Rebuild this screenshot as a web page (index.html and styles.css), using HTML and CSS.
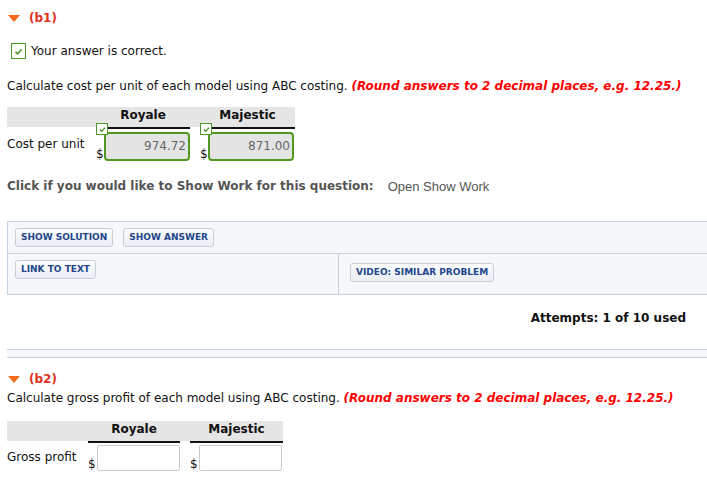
FILE: index.html
```html
<!DOCTYPE html>
<html>
<head>
<meta charset="utf-8">
<link rel="stylesheet" href="styles.css">
</head>
<body>
<div class="page">
  <div class="part-head part-head-b1">
    <span class="tri"></span><span class="part-label">(b1)</span>
  </div>
  <div class="correct">
    <span class="chk-big"><svg width="11" height="11" viewBox="0 0 11 11"><path d="M2.5 5.8 L4.6 7.8 L8.6 3.2" fill="none" stroke="#4a9a2a" stroke-width="1.6"/></svg></span>
    <span>Your answer is correct.</span>
  </div>
  <p class="q q-b1">Calculate cost per unit of each model using ABC costing. <em class="hint">(Round answers to 2 decimal places, e.g. 12.25.)</em></p>

  <div class="grid grid-b1">
    <div class="hd hd-blank"></div>
    <div class="hd hd-col">Royale</div>
    <div class="hd hd-gap"></div>
    <div class="hd hd-col">Majestic</div>
    <div class="rowlabel">Cost per unit</div>
    <div class="cell">
      <span class="mini-chk"><svg width="9" height="9" viewBox="0 0 9 9"><path d="M1.8 4.6 L3.7 6.3 L7.2 2.6" fill="none" stroke="#4a9a2a" stroke-width="1.3"/></svg></span>
      <span class="dollar">$</span><span class="inp inp-ok">974.72</span>
    </div>
    <div></div>
    <div class="cell">
      <span class="mini-chk"><svg width="9" height="9" viewBox="0 0 9 9"><path d="M1.8 4.6 L3.7 6.3 L7.2 2.6" fill="none" stroke="#4a9a2a" stroke-width="1.3"/></svg></span>
      <span class="dollar">$</span><span class="inp inp-ok">871.00</span>
    </div>
  </div>

  <div class="showwork">
    <span class="sw-label">Click if you would like to Show Work for this question:</span>
    <span class="sw-link">Open Show Work</span>
  </div>

  <div class="toolbox">
    <div class="tb-row1">
      <span class="btn">SHOW SOLUTION</span>
      <span class="btn">SHOW ANSWER</span>
    </div>
    <div class="tb-row2">
      <div class="tb-left"><span class="btn">LINK TO TEXT</span></div>
      <div class="tb-right"><span class="btn">VIDEO: SIMILAR PROBLEM</span></div>
    </div>
  </div>

  <div class="attempts">Attempts: 1 of 10 used</div>

  <div class="sep"></div>

  <div class="part-head part-head-b2">
    <span class="tri"></span><span class="part-label">(b2)</span>
  </div>
  <p class="q q-b2">Calculate gross profit of each model using ABC costing. <em class="hint">(Round answers to 2 decimal places, e.g. 12.25.)</em></p>

  <div class="grid grid-b2">
    <div class="hd hd-blank"></div>
    <div class="hd hd-col">Royale</div>
    <div class="hd hd-gap"></div>
    <div class="hd hd-col">Majestic</div>
    <div class="rowlabel">Gross profit</div>
    <div class="cell"><span class="dollar">$</span><span class="inp inp-empty"></span></div>
    <div></div>
    <div class="cell"><span class="dollar">$</span><span class="inp inp-empty"></span></div>
  </div>
</div>
</body>
</html>
```
FILE: styles.css
```css
html, body {
  margin: 0;
  padding: 0;
  background: #fff;
}
body {
  font-family: "DejaVu Sans", Verdana, sans-serif;
  font-size: 12px;
  color: #111;
  width: 707px;
  overflow: hidden;
}
.page {
  padding-left: 7px;
}
.part-head {
  display: flex;
  align-items: center;
  gap: 9px;
  height: 20px;
}
.part-head-b1 {
  margin-top: 8px;
  padding-left: 1px;
}
.part-head-b2 {
  margin-top: 11px;
  padding-left: 1px;
}
.tri {
  width: 0;
  height: 0;
  border-left: 6px solid transparent;
  border-right: 6px solid transparent;
  border-top: 7px solid #f26a1b;
}
.part-label {
  color: #e0301e;
  font-weight: bold;
  font-size: 12px;
}
.correct {
  display: flex;
  align-items: center;
  gap: 5px;
  margin-top: 15px;
  padding-left: 4px;
}
.chk-big {
  width: 13px;
  height: 14px;
  border: 1.5px solid #4a9a2a;
  display: flex;
  align-items: center;
  justify-content: center;
  background: #fff;
}
.q {
  margin: 0;
  line-height: 16px;
}
.q-b1 {
  margin-top: 19px;
}
.q-b2 {
  margin-top: 1px;
}
.hint {
  color: #ff0000;
  font-weight: bold;
  font-style: italic;
}
.grid {
  display: grid;
  align-items: end;
}
.grid-b1 {
  grid-template-columns: 89px 94px 10px 95px;
  margin-top: 13px;
}
.grid-b2 {
  grid-template-columns: 81px 92px 10px 93px;
  margin-top: 15px;
}
.hd {
  background: #e5e5e5;
  height: 20px;
  font-weight: bold;
  text-align: center;
  line-height: 16px;
  box-sizing: border-box;
}
.hd-col {
  border-bottom: 2px solid #111;
  height: 22px;
  background: linear-gradient(#e5e5e5 0 20px, #fff 20px);
}
.hd-blank, .hd-gap {
  height: 22px;
  background: linear-gradient(#e5e5e5 0 20px, #fff 20px);
}
.rowlabel {
  align-self: center;
}
.grid-b1 .rowlabel {
  padding-bottom: 2px;
}
.cell {
  position: relative;
  display: flex;
  align-items: flex-end;
}
.dollar {
  line-height: 12px;
}
.grid-b1 .cell {
  padding-top: 3px;
}
.grid-b1 .dollar {
  width: 8px;
  margin-bottom: 1px;
}
.inp {
  box-sizing: border-box;
  display: block;
  text-align: right;
}
.inp-ok {
  width: 86px;
  height: 29px;
  border: 2px solid #529a1f;
  border-radius: 4px;
  background: #e4e4e4;
  color: #666;
  padding-right: 2px;
  line-height: 25px;
  margin-top: 0;
}
.grid-b2 .cell {
  padding-top: 2px;
}
.grid-b2 .dollar {
  width: 9px;
  margin-bottom: 1px;
}
.inp-empty {
  width: 83px;
  height: 26px;
  border: 1px solid #c8c8c8;
  border-radius: 2px;
  background: #fff;
}
.mini-chk {
  position: absolute;
  left: 0;
  top: -6px;
  box-sizing: border-box;
  width: 12px;
  height: 12px;
  border: 1px solid #4a9a2a;
  background: #fff;
  display: flex;
  align-items: center;
  justify-content: center;
}
.showwork {
  margin-top: 17px;
  display: flex;
  align-items: center;
  height: 16px;
}
.sw-label {
  font-weight: bold;
  color: #555;
}
.sw-link {
  font-family: "Liberation Sans", Arial, sans-serif;
  font-size: 13px;
  color: #555;
  margin-left: 14px;
}
.toolbox {
  margin-top: 27px;
  border: 1px solid #c8d3e1;
  border-right: none;
  background: #f5f7fa;
}
.tb-row1 {
  display: flex;
  gap: 10px;
  padding: 6px 7px 6px;
  border-bottom: 1px solid #c8d3e1;
}
.tb-row2 {
  display: flex;
  height: 40px;
}
.tb-left {
  box-sizing: border-box;
  width: 331px;
  border-right: 1px solid #c8d3e1;
  padding: 6px 7px;
}
.tb-right {
  padding: 9px 11px;
}
.btn {
  display: inline-block;
  box-sizing: border-box;
  height: 19px;
  line-height: 17px;
  padding: 0 5px;
  border: 1px solid #c5ced9;
  border-radius: 3px;
  background: linear-gradient(#fbfcfd, #eaeef3);
  color: #23468c;
  font-weight: bold;
  font-size: 9px;
  letter-spacing: 0;
}
.attempts {
  text-align: right;
  font-weight: bold;
  padding-right: 21px;
  margin-top: 15px;
  line-height: 16px;
}
.sep {
  margin-top: 23px;
  height: 7px;
  border-top: 1px solid #c8d3e1;
  border-bottom: 1px solid #c8d3e1;
  background: #f5f7fa;
}
```
